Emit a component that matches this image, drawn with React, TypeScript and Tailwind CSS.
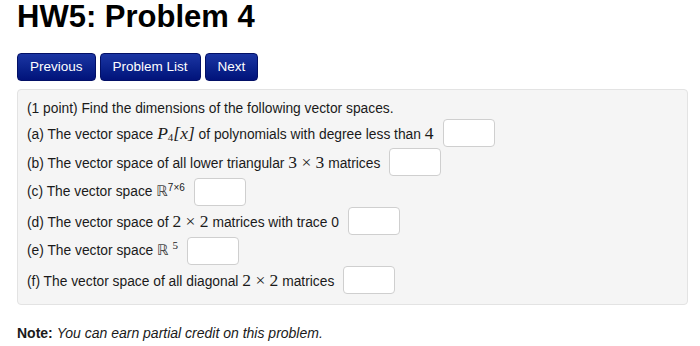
import React from 'react'

const sans = { fontFamily: '"Liberation Sans", Arial, Helvetica, sans-serif' }

function AnswerBox() {
  return (
    <input
      type="text"
      className="ml-[9px] h-[28px] w-[52px] rounded-[4px] border border-[#cfcfcf] bg-white outline-none"
    />
  )
}

function M({ children, italic }: { children: React.ReactNode; italic?: boolean }) {
  return (
    <span
      className={`text-[17.5px] ${italic ? 'italic' : ''}`}
      style={{ fontFamily: '"Liberation Serif", "Times New Roman", serif' }}
    >
      {children}
    </span>
  )
}

function Reals() {
  return (
    <span className="text-[14.5px] text-[#444]" style={{ fontFamily: '"DejaVu Sans", sans-serif' }}>
      ℝ
    </span>
  )
}

function Row({ children }: { children: React.ReactNode }) {
  return <div className="flex h-[29.5px] items-center">{children}</div>
}

export default function App() {
  const buttons = ['Previous', 'Problem List', 'Next']

  return (
    <div className="min-h-[346px] bg-white px-[17px] text-[#1a1a1a]" style={sans}>
      <h1 className="text-[31px] font-bold leading-[33px] text-black">HW5: Problem 4</h1>

      <div className="mt-[20px] flex gap-[4px]">
        {buttons.map((b) => (
          <button
            key={b}
            className="h-[28px] rounded-[4px] border border-[#031066] bg-gradient-to-b from-[#1b35a3] to-[#02127a] px-[12px] text-[13.5px] text-white"
          >
            {b}
          </button>
        ))}
      </div>

      <div className="mt-[8px] w-[671px] rounded-[4px] border border-[#e3e3e3] bg-[#f5f5f5] px-[9px] pt-[9px] pb-[9px] text-[13.8px]">
        <div className="h-[19px] leading-[19px]">
          (1 point) Find the dimensions of the following vector spaces.
        </div>
        <Row>
          <span>
            (a) The vector space{' '}
            <M italic>
              P<sub className="text-[11px] not-italic">4</sub>[x]
            </M>{' '}
            of polynomials with degree less than <M>4</M>
          </span>
          <AnswerBox />
        </Row>
        <Row>
          <span>
            (b) The vector space of all lower triangular <M>3 × 3</M> matrices
          </span>
          <AnswerBox />
        </Row>
        <Row>
          <span>
            (c) The vector space <Reals />
            <sup className="text-[10px]">7×6</sup>
          </span>
          <AnswerBox />
        </Row>
        <Row>
          <span>
            (d) The vector space of <M>2 × 2</M> matrices with trace 0
          </span>
          <AnswerBox />
        </Row>
        <Row>
          <span>
            (e) The vector space <Reals />{' '}
            <sup className="text-[11px]" style={{ fontFamily: '"Liberation Serif", serif' }}>
              5
            </sup>
          </span>
          <AnswerBox />
        </Row>
        <Row>
          <span>
            (f) The vector space of all diagonal <M>2 × 2</M> matrices
          </span>
          <AnswerBox />
        </Row>
      </div>

      <p className="mt-[18px] text-[14px] leading-[20px]">
        <b>Note:</b> <i>You can earn partial credit on this problem.</i>
      </p>
    </div>
  )
}
